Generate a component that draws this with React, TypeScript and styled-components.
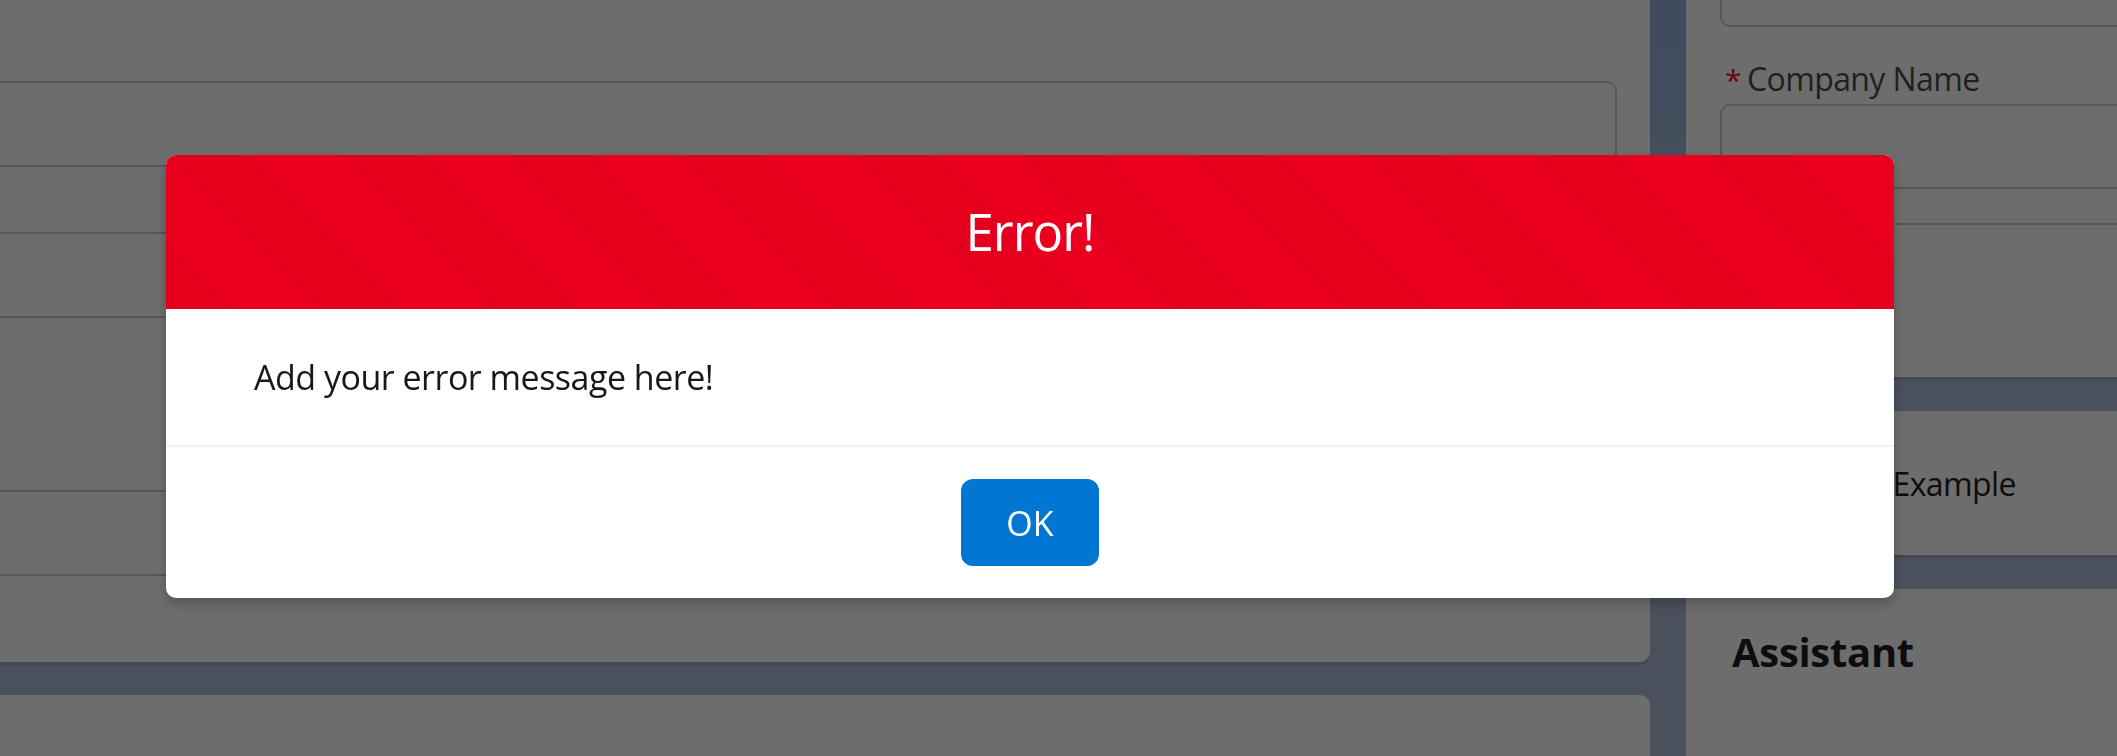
import React from 'react';
import styled, { createGlobalStyle } from 'styled-components';

const GlobalStyle = createGlobalStyle`
  html, body {
    margin: 0;
    padding: 0;
    width: 2117px;
    height: 756px;
    overflow: hidden;
    font-family: "Open Sans", "Noto Sans", sans-serif;
    color: #181818;
  }
`;

const Page = styled.div`
  display: grid;
  grid-template-columns: 1710px 1fr;
  column-gap: 36px;
  width: 2280px;
  height: 756px;
  margin-left: -60px;
  overflow: hidden;
  background: linear-gradient(180deg, #8cafd9 0px, #a3b7d6 260px, #a9b9d6 400px);
`;

const Column = styled.div`
  display: flex;
  flex-direction: column;
  gap: ${(p: { $gap: number }) => p.$gap}px;
  margin: -80px 0 -40px;
`;

const Card = styled.section<{ $height?: number; $pad: string }>`
  background: #fff;
  border-radius: 10px;
  box-shadow: 0 3px 0 rgba(0, 0, 0, 0.1);
  padding: ${(p) => p.$pad};
  height: ${(p) => (p.$height ? `${p.$height}px` : 'auto')};
  flex: ${(p) => (p.$height ? 'none' : '1')};
  overflow: hidden;
  box-sizing: border-box;
`;

const Input = styled.div<{ $mt?: number; $h?: number }>`
  height: ${(p) => p.$h ?? 86}px;
  margin-top: ${(p) => p.$mt ?? 0}px;
  border: 2px solid #c9c9c9;
  border-radius: 10px;
  box-sizing: border-box;
  background: #fff;
`;

const Label = styled.label`
  display: flex;
  align-items: baseline;
  gap: 6px;
  margin-top: 28px;
  padding-left: 5px;
  font-size: 32px;
  letter-spacing: -0.6px;
  line-height: 1.5;
  color: #444;
`;

const Required = styled.abbr`
  color: #ea001e;
  text-decoration: none;
  font-size: 30px;
`;

const CardTitle = styled.h2<{ $bold?: boolean }>`
  margin: 0;
  font-size: ${(p) => (p.$bold ? 40 : 32)}px;
  font-weight: ${(p) => (p.$bold ? 700 : 400)};
  letter-spacing: ${(p) => (p.$bold ? -0.3 : -0.6)}px;
  line-height: 1.25;
  color: #181818;
`;

const CenterRow = styled.div`
  display: flex;
  align-items: center;
  height: 100%;
  padding-top: 2px;
  box-sizing: border-box;
`;

const Backdrop = styled.div`
  position: fixed;
  inset: 0;
  background: rgba(8, 7, 7, 0.59);
`;

const ModalLayer = styled.div`
  position: fixed;
  inset: 0;
  padding: 155px 0 0 166px;
`;

const Modal = styled.div`
  width: 1728px;
  border-radius: 10px;
  background: #fff;
  box-shadow: 0 6px 12px rgba(0, 0, 0, 0.22);
`;

const ModalHeader = styled.header`
  height: 154px;
  display: flex;
  align-items: center;
  justify-content: center;
  border-radius: 10px 10px 0 0;
  background-color: #ea001e;
  background-image: linear-gradient(
    45deg,
    rgba(0, 0, 0, 0.025) 25%,
    transparent 25%,
    transparent 50%,
    rgba(0, 0, 0, 0.025) 50%,
    rgba(0, 0, 0, 0.025) 75%,
    transparent 75%,
    transparent
  );
  background-size: 171px 171px;
  color: #fff;
`;

const ModalTitle = styled.h1`
  margin: 0;
  font-size: 51px;
  font-weight: 400;
  letter-spacing: -1px;
  line-height: 1.25;
`;

const ModalBody = styled.div`
  height: 136px;
  display: flex;
  align-items: center;
  padding-left: 88px;
  font-size: 34px;
  letter-spacing: -0.5px;
  color: #181818;
  border-bottom: 2px solid #f3f3f3;
`;

const ModalFooter = styled.footer`
  height: 151px;
  display: flex;
  align-items: center;
  justify-content: center;
`;

const Button = styled.button`
  width: 138px;
  height: 87px;
  border: none;
  border-radius: 12px;
  background: #0176d3;
  color: #fff;
  font-family: inherit;
  font-size: 34px;
  cursor: pointer;
`;

export default function App() {
  return (
    <>
      <GlobalStyle />
      <Page>
        <Column $gap={33}>
          <Card $height={742} $pad="161px 33px 0 30px">
            <Input />
            <Input $mt={65} />
            <Input $mt={172} />
          </Card>
          <Card $pad="0" />
        </Column>
        <Column $gap={34}>
          <Card $height={457} $pad="21px 0 0 34px">
            <Input $h={86} />
            <Label>
              <Required title="required">*</Required>
              Company Name
            </Label>
            <Input $mt={1} $h={85} />
            <Input $mt={34} $h={200} />
          </Card>
          <Card $height={144} $pad="0 0 0 46px">
            <CenterRow>
              <CardTitle>Dialog Box Example</CardTitle>
            </CenterRow>
          </Card>
          <Card $pad="38px 0 0 46px">
            <CardTitle $bold>Assistant</CardTitle>
          </Card>
        </Column>
      </Page>
      <Backdrop />
      <ModalLayer>
        <Modal role="alertdialog" aria-labelledby="error-title">
          <ModalHeader>
            <ModalTitle id="error-title">Error!</ModalTitle>
          </ModalHeader>
          <ModalBody>Add your error message here!</ModalBody>
          <ModalFooter>
            <Button>OK</Button>
          </ModalFooter>
        </Modal>
      </ModalLayer>
    </>
  );
}
